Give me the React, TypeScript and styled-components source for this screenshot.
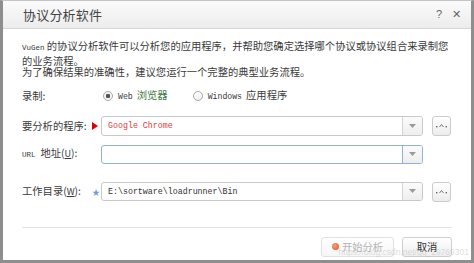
import React from 'react';

import styled, { createGlobalStyle } from 'styled-components';

const GlobalStyle = createGlobalStyle`
  html, body {
    margin: 0;
    padding: 0;
    background: #ffffff;
  }
  body {
    font-family: "Noto Sans CJK SC", "Liberation Sans", sans-serif;
    color: #333;
  }
`;

const ArrowIcon = () => (
  <svg width="7" height="4" viewBox="0 0 7 4">
    <path d="M0 0 L7 0 L3.5 4 Z" fill="#9a9a9a" />
  </svg>
);

const BrowseIcon = () => (
  <svg width="11" height="5" viewBox="0 0 11 5">
    <rect x="0" y="3" width="1.4" height="1.4" fill="#666" />
    <rect x="9.6" y="3" width="1.4" height="1.4" fill="#666" />
    <path d="M3.5 4 L5.5 1.5 L7.5 4" stroke="#777" strokeWidth="1" fill="none" />
  </svg>
);

const App = () => {
  return (
    <>
      <GlobalStyle />
      <Window>
        <TitleBar>
          <Title>协议分析软件</Title>
          <TitleIcons>
            <TitleIcon>?</TitleIcon>
            <TitleIcon>✕</TitleIcon>
          </TitleIcons>
        </TitleBar>

        <Content>
          <Description>
            <Mono $size={7.5}>VuGen</Mono> 的协议分析软件可以分析您的应用程序，并帮助您确定选择哪个协议或协议组合来录制您的业务流程。
            <br />
            为了确保结果的准确性，建议您运行一个完整的典型业务流程。
          </Description>

          <Row $top={11} $height={14}>
            <Label>
              <span>录制:</span>
            </Label>
            <Marker />
            <RadioGroup>
              <RadioItem>
                <Radio $checked />
                <RadioLabel>
                  <Mono $gap={4}>Web</Mono>
                  <Green>浏览器</Green>
                </RadioLabel>
              </RadioItem>
              <RadioItem>
                <Radio />
                <RadioLabel>
                  <Mono $gap={4}>Windows</Mono>
                  应用程序
                </RadioLabel>
              </RadioItem>
            </RadioGroup>
          </Row>

          <Row $top={13} $height={20}>
            <Label>
              <span>要分析的程序:</span>
            </Label>
            <Marker>
              <RedArrow />
            </Marker>
            <Combo>
              <ComboText $red>Google Chrome</ComboText>
              <DropBtn>
                <ArrowIcon />
              </DropBtn>
            </Combo>
            <BrowseBtn>
              <BrowseIcon />
            </BrowseBtn>
          </Row>

          <Row $top={9} $height={19}>
            <Label>
              <span>
                <Mono $size={7.5} $gap={5}>URL</Mono>地址(<u>U</u>):
              </span>
            </Label>
            <Marker />
            <Combo $focused>
              <ComboText />
              <DropBtn $focused>
                <ArrowIcon />
              </DropBtn>
            </Combo>
          </Row>

          <Row $top={18} $height={19}>
            <Label>
              <span>
                工作目录(<u>W</u>):
              </span>
            </Label>
            <Marker>
              <Star>★</Star>
            </Marker>
            <Combo>
              <ComboText>E:\sortware\loadrunner\Bin</ComboText>
              <DropBtn>
                <ArrowIcon />
              </DropBtn>
            </Combo>
            <BrowseBtn>
              <BrowseIcon />
            </BrowseBtn>
          </Row>

          <Separator />

          <Footer>
            <Button $width={73} disabled>
              <StartDot />
              开始分析
            </Button>
            <Button $width={50}>取消</Button>
          </Footer>
        </Content>

        <Watermark>https://blog.csdn.net/qq_29769301</Watermark>
      </Window>
    </>
  );
};

const Window = styled.div`
  position: relative;
  width: 474px;
  height: 263px;
  box-sizing: border-box;
  border-left: 3px solid #8e8e8e;
  border-right: 3px solid #8e8e8e;
  border-bottom: 3px solid #8e8e8e;
  border-top: 1px solid #c4c4c4;
  background: #ffffff;
  display: flex;
  flex-direction: column;
  overflow: hidden;
`;

const TitleBar = styled.div`
  height: 27px;
  flex-shrink: 0;
  padding: 0 10px 0 20px;
  border-bottom: 1px solid #d6d6d6;
  background: linear-gradient(#fbfbfb, #ececec);

  display: flex;
  flex-direction: row;
  align-items: center;
  justify-content: space-between;
`;

const Title = styled.div`
  font-size: 13px;
  color: #444;
  letter-spacing: 0.2px;
`;

const TitleIcons = styled.div`
  display: flex;
  flex-direction: row;
  gap: 10px;
`;

const TitleIcon = styled.span`
  font-family: "Liberation Sans", sans-serif;
  font-size: 11px;
  color: #666;
`;

const Content = styled.div`
  padding: 0 19px;
  display: flex;
  flex-direction: column;
`;

const Mono = styled.span<{ $size?: number; $gap?: number }>`
  font-family: "Liberation Mono", monospace;
  font-size: ${(p) => p.$size ?? 8.2}px;
  margin-right: ${(p) => p.$gap ?? 0}px;
`;

const Description = styled.div`
  margin-top: 11px;
  font-size: 10.3px;
  line-height: 11.5px;
  color: #3a3a3a;
  width: 432px;
`;

const Row = styled.div<{ $top: number; $height: number }>`
  margin-top: ${(p) => p.$top}px;
  height: ${(p) => p.$height}px;

  display: flex;
  flex-direction: row;
  align-items: stretch;
`;

const Label = styled.div`
  width: 69px;
  font-size: 10.3px;
  line-height: 14px;
  color: #3a3a3a;
  white-space: nowrap;

  display: flex;
  align-items: center;

  u {
    font-size: 9px;
  }
`;

const Marker = styled.div`
  width: 10px;

  display: flex;
  align-items: center;
`;

const RedArrow = styled.div`
  width: 0;
  height: 0;
  margin-left: 1px;
  border-top: 4.5px solid transparent;
  border-bottom: 4.5px solid transparent;
  border-left: 6px solid #dd0000;
`;

const Star = styled.span`
  font-size: 8px;
  color: #6c9de0;
  margin-left: 1px;
`;

const RadioGroup = styled.div`
  display: flex;
  flex-direction: row;
  align-items: center;
  gap: 25px;
  padding-left: 2px;
`;

const RadioItem = styled.div`
  display: flex;
  flex-direction: row;
  align-items: center;
  gap: 4px;
`;

const RadioLabel = styled.span`
  font-size: 10.3px;
  line-height: 14px;
  color: #3a3a3a;
  white-space: nowrap;
`;

const Green = styled.span`
  color: #3f7a45;
`;

const Radio = styled.span<{ $checked?: boolean }>`
  width: 8px;
  height: 8px;
  border-radius: 50%;
  border: 1px solid #a8a8a8;
  background: ${(p) =>
    p.$checked
      ? 'radial-gradient(circle, #555 0 2px, #f4f4f4 2.5px)'
      : 'linear-gradient(#ffffff, #eeeeee)'};
  margin-right: 1px;
`;

const Combo = styled.div<{ $focused?: boolean }>`
  width: 322px;
  box-sizing: border-box;
  border: 1px solid ${(p) => (p.$focused ? '#8fb1da' : '#c9c9c9')};
  border-radius: 3px;
  background: #ffffff;

  display: flex;
  flex-direction: row;
`;

const ComboText = styled.div<{ $red?: boolean }>`
  flex: 1;
  padding-left: 6px;
  font-family: "Liberation Mono", monospace;
  font-size: 8.3px;
  color: ${(p) => (p.$red ? '#e03c3c' : '#333')};

  display: flex;
  align-items: center;
`;

const DropBtn = styled.div<{ $focused?: boolean }>`
  width: 19px;
  border-left: 1px solid ${(p) => (p.$focused ? '#8fb1da' : '#d4d4d4')};
  border-radius: 0 2px 2px 0;
  background: linear-gradient(#fbfbfb, #eeeeee);

  display: flex;
  align-items: center;
  justify-content: center;
`;

const BrowseBtn = styled.div`
  width: 19px;
  height: 20px;
  box-sizing: border-box;
  margin-left: 9px;
  border: 1px solid #cccccc;
  border-radius: 3px;
  background: linear-gradient(#ffffff, #ececec);

  display: flex;
  align-items: center;
  justify-content: center;
`;

const Separator = styled.div`
  margin-top: 26px;
  height: 1px;
  background: #e4e4e4;
`;

const Footer = styled.div`
  margin-top: 9px;

  display: flex;
  flex-direction: row;
  justify-content: flex-end;
  gap: 8px;
`;

const Button = styled.button<{ $width: number }>`
  width: ${(p) => p.$width}px;
  height: 20px;
  box-sizing: border-box;
  padding: 0;
  border: 1px solid #cfcfcf;
  border-radius: 3px;
  background: linear-gradient(#ffffff, #eeeeee);
  font-family: "Noto Sans CJK SC", sans-serif;
  font-size: 10.3px;
  color: #333;

  display: flex;
  align-items: center;
  justify-content: center;
  gap: 3px;

  &:disabled {
    color: #b4b4b4;
    border-color: #e2e2e2;
    background: linear-gradient(#ffffff, #f6f6f6);
  }
`;

const StartDot = styled.span`
  width: 7px;
  height: 7px;
  border-radius: 50%;
  background: radial-gradient(circle at 40% 40%, #f8a070, #e0502a);
`;

const Watermark = styled.div`
  position: absolute;
  right: 2px;
  bottom: 3px;
  font-family: "Liberation Sans", sans-serif;
  font-size: 8.5px;
  color: rgba(180, 180, 180, 0.45);
  pointer-events: none;
`;

export default App;
